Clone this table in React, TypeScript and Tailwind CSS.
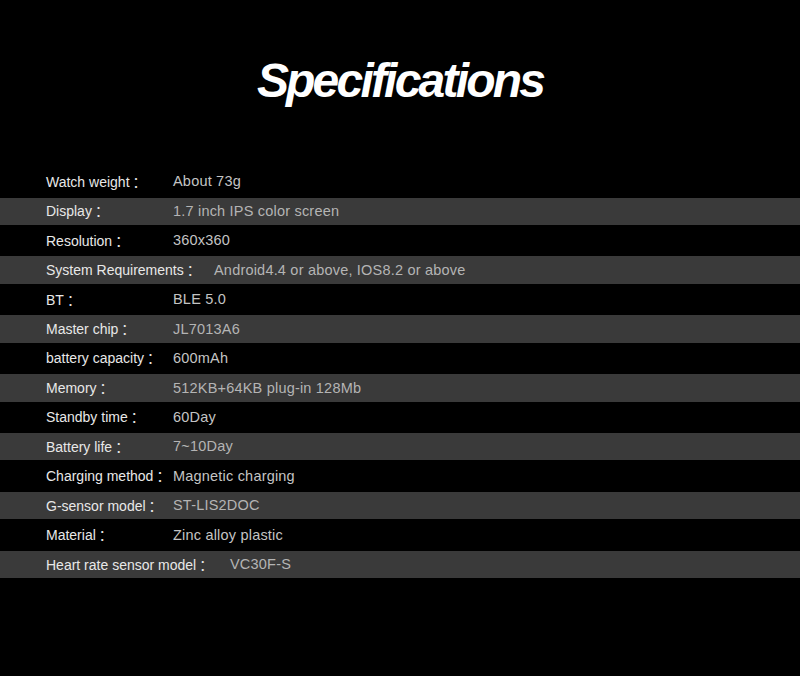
const specs = [
  { label: "Watch weight", value: "About 73g" },
  { label: "Display", value: "1.7 inch IPS color screen" },
  { label: "Resolution", value: "360x360" },
  { label: "System Requirements", value: "Android4.4 or above, IOS8.2 or above", labelW: "min-w-[168px]" },
  { label: "BT", value: "BLE 5.0" },
  { label: "Master chip", value: "JL7013A6" },
  { label: "battery capacity", value: "600mAh" },
  { label: "Memory", value: "512KB+64KB plug-in 128Mb" },
  { label: "Standby time", value: "60Day" },
  { label: "Battery life", value: "7~10Day" },
  { label: "Charging method", value: "Magnetic charging" },
  { label: "G-sensor model", value: "ST-LIS2DOC" },
  { label: "Material", value: "Zinc alloy plastic" },
  { label: "Heart rate sensor model", value: "VC30F-S", labelW: "min-w-[184px]" },
]

export default function App() {
  return (
    <div
      className="w-[800px] h-[676px] bg-black overflow-hidden"
      style={{ fontFamily: '"Liberation Sans", "Noto Sans CJK SC", sans-serif' }}
    >
      {/* Title */}
      <h1 className="pt-[53px] h-[166px] text-center text-white text-[48px] leading-[56px] font-bold italic tracking-[-2.8px]">
        Specifications
      </h1>

      {/* Spec rows */}
      <div className="flex flex-col">
        {specs.map((s, i) => (
          <div
            key={s.label}
            className={`flex items-center pl-[46px] whitespace-nowrap ${
              i % 2 === 1 ? "h-[27.3px] bg-[#3a3a3a]" : "h-[31.6px] bg-black"
            }`}
          >
            <span className={`${s.labelW ?? "min-w-[127px]"} text-[14px] text-[#e8e8e8]`}>
              {s.label}
              <span className="ml-[3px]" style={{ fontFamily: '"Noto Sans CJK SC", sans-serif' }}>
                ：
              </span>
            </span>
            <span
              className={`pt-[1px] text-[14.5px] tracking-[0.2px] ${i % 2 === 1 ? "text-[#b4b4b4]" : "text-[#c4c4c4]"}`}
            >
              {s.value}
            </span>
          </div>
        ))}
      </div>
    </div>
  )
}
